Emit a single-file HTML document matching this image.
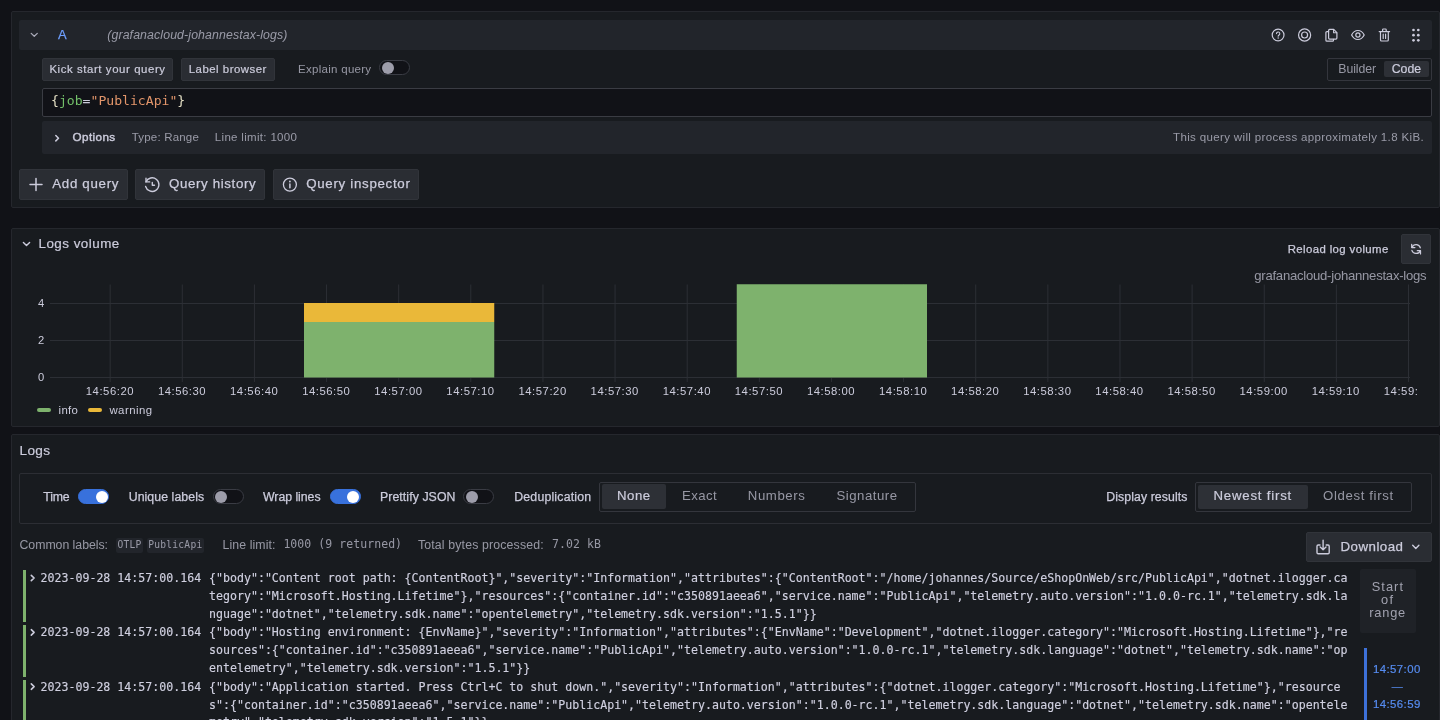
<!DOCTYPE html>
<html lang="en">
<head>
<meta charset="utf-8">
<title>Explore - Loki logs</title>
<style>
*{box-sizing:border-box;margin:0;padding:0}
html,body{width:1440px;height:720px;overflow:hidden;background:#111217}
body{position:relative;font-family:"Liberation Sans",sans-serif;color:rgb(204,204,220)}
.b{position:absolute}
.t{position:absolute;height:20px;line-height:20px;white-space:pre}
.m{font-family:"DejaVu Sans Mono","Liberation Mono",monospace;font-size:11.6px;letter-spacing:0.005px;color:rgb(208,208,224);-webkit-text-stroke:0.15px rgb(208,208,224)}
.panel{position:absolute;background:#181b1f;border:1px solid #25272d;border-radius:2px}
.hdr{background:#22252b;border-radius:2px}
.btn{position:absolute;background:#2a2d33;border:1px solid #31343a;border-radius:2px}
.sw{position:absolute;width:31px;height:15.6px;border-radius:8px;background:#111217;border:1px solid #3a3c44}
.sw i{position:absolute;left:1.4px;top:0.8px;width:12px;height:12px;border-radius:50%;background:#9d9daa}
.sw.on{background:#3871dc;border-color:#3871dc}
.sw.on i{left:auto;right:0.4px;background:#fff}
.rg{position:absolute;background:#181b1f;border:1px solid #34363d;border-radius:2px}
.sel{position:absolute;background:#2d3036;border-radius:2px}
svg{position:absolute;overflow:visible}
.ic{fill:none;stroke:rgb(204,204,220);stroke-width:1.25;stroke-linecap:round;stroke-linejoin:round}
</style>
</head>
<body>
<div id="root" style="position:absolute;left:0;top:0;width:1440px;height:720px;will-change:transform">
<!-- ================= Query panel ================= -->
<div class="panel" style="left:11px;top:11px;width:1429px;height:197px"></div>
<div class="b hdr" style="left:19px;top:20px;width:1412.5px;height:30px"></div>
<div class="btn" style="left:42px;top:58px;width:131px;height:22.5px"></div>
<div class="btn" style="left:181px;top:58px;width:93.5px;height:22.5px"></div>
<div class="sw" style="left:379.2px;top:59.9px"><i></i></div>
<div class="rg" style="left:1327px;top:57.5px;width:104.75px;height:23px"></div>
<div class="sel" style="left:1383.75px;top:60.75px;width:45.5px;height:16.5px"></div>
<div class="b" style="left:42px;top:88px;width:1389.5px;height:28.5px;background:#111217;border:1px solid #3a3c43;border-radius:2px"></div>
<div class="t" style="left:51px;top:91px;font-family:'DejaVu Sans Mono','Liberation Mono',monospace;font-size:13.12px;letter-spacing:0"><span style="color:#e4dfc4">{</span><span style="color:#73bf69">job</span><span style="color:#ccccdc">=</span><span style="color:#e2956a">"PublicApi"</span><span style="color:#e4dfc4">}</span></div>
<div class="b hdr" style="left:42px;top:121px;width:1389.5px;height:33px"></div>
<div class="btn" style="left:19px;top:169px;width:109px;height:30.5px"></div>
<div class="btn" style="left:135px;top:169px;width:130px;height:30.5px"></div>
<div class="btn" style="left:273px;top:169px;width:145.75px;height:30.5px"></div>

<!-- ================= Logs volume panel ================= -->
<div class="panel" style="left:11px;top:228px;width:1429px;height:199px"></div>
<div class="btn" style="left:1400.5px;top:234px;width:30.5px;height:30px"></div>
<svg style="left:0;top:280px" width="1440" height="110" viewBox="0 280 1440 110">
<g stroke="#2c2f35" stroke-width="1">
<line x1="110.16" x2="110.16" y1="284.5" y2="382"/><line x1="182.29" x2="182.29" y1="284.5" y2="382"/><line x1="254.42" x2="254.42" y1="284.5" y2="382"/><line x1="326.55" x2="326.55" y1="284.5" y2="382"/><line x1="398.68" x2="398.68" y1="284.5" y2="382"/><line x1="470.81" x2="470.81" y1="284.5" y2="382"/><line x1="542.94" x2="542.94" y1="284.5" y2="382"/><line x1="615.07" x2="615.07" y1="284.5" y2="382"/><line x1="687.20" x2="687.20" y1="284.5" y2="382"/><line x1="759.33" x2="759.33" y1="284.5" y2="382"/><line x1="831.46" x2="831.46" y1="284.5" y2="382"/><line x1="903.59" x2="903.59" y1="284.5" y2="382"/><line x1="975.72" x2="975.72" y1="284.5" y2="382"/><line x1="1047.85" x2="1047.85" y1="284.5" y2="382"/><line x1="1119.98" x2="1119.98" y1="284.5" y2="382"/><line x1="1192.11" x2="1192.11" y1="284.5" y2="382"/><line x1="1264.24" x2="1264.24" y1="284.5" y2="382"/><line x1="1336.37" x2="1336.37" y1="284.5" y2="382"/><line x1="1408.50" x2="1408.50" y1="284.5" y2="382"/>
<line x1="50" x2="1410" y1="303.5" y2="303.5"/><line x1="50" x2="1410" y1="340.5" y2="340.5"/><line x1="50" x2="1410" y1="377.5" y2="377.5"/>
</g>
<rect x="304" y="322" width="190.25" height="55.5" fill="#7eb26d"/>
<rect x="304" y="303" width="190.25" height="19" fill="#eab839"/>
<rect x="736.75" y="284.25" width="190.25" height="93.25" fill="#7eb26d"/>
</svg>
<div class="b" style="left:0;top:380px;width:1417.5px;height:24px;overflow:hidden">
<div class="b" style="left:0;top:-380px;width:1440px;height:720px">
<div class="t" style="left:85.80px;top:381.00px;font-size:11.3px;letter-spacing:0.539px;color:rgb(204,204,220);">14:56:20</div>
<div class="t" style="left:157.91px;top:381.00px;font-size:11.3px;letter-spacing:0.539px;color:rgb(204,204,220);">14:56:30</div>
<div class="t" style="left:230.02px;top:381.00px;font-size:11.3px;letter-spacing:0.539px;color:rgb(204,204,220);">14:56:40</div>
<div class="t" style="left:302.13px;top:381.00px;font-size:11.3px;letter-spacing:0.539px;color:rgb(204,204,220);">14:56:50</div>
<div class="t" style="left:374.24px;top:381.00px;font-size:11.3px;letter-spacing:0.539px;color:rgb(204,204,220);">14:57:00</div>
<div class="t" style="left:446.35px;top:381.00px;font-size:11.3px;letter-spacing:0.539px;color:rgb(204,204,220);">14:57:10</div>
<div class="t" style="left:518.46px;top:381.00px;font-size:11.3px;letter-spacing:0.539px;color:rgb(204,204,220);">14:57:20</div>
<div class="t" style="left:590.57px;top:381.00px;font-size:11.3px;letter-spacing:0.539px;color:rgb(204,204,220);">14:57:30</div>
<div class="t" style="left:662.68px;top:381.00px;font-size:11.3px;letter-spacing:0.539px;color:rgb(204,204,220);">14:57:40</div>
<div class="t" style="left:734.79px;top:381.00px;font-size:11.3px;letter-spacing:0.539px;color:rgb(204,204,220);">14:57:50</div>
<div class="t" style="left:806.90px;top:381.00px;font-size:11.3px;letter-spacing:0.539px;color:rgb(204,204,220);">14:58:00</div>
<div class="t" style="left:879.01px;top:381.00px;font-size:11.3px;letter-spacing:0.539px;color:rgb(204,204,220);">14:58:10</div>
<div class="t" style="left:951.12px;top:381.00px;font-size:11.3px;letter-spacing:0.539px;color:rgb(204,204,220);">14:58:20</div>
<div class="t" style="left:1023.23px;top:381.00px;font-size:11.3px;letter-spacing:0.539px;color:rgb(204,204,220);">14:58:30</div>
<div class="t" style="left:1095.34px;top:381.00px;font-size:11.3px;letter-spacing:0.539px;color:rgb(204,204,220);">14:58:40</div>
<div class="t" style="left:1167.45px;top:381.00px;font-size:11.3px;letter-spacing:0.539px;color:rgb(204,204,220);">14:58:50</div>
<div class="t" style="left:1239.56px;top:381.00px;font-size:11.3px;letter-spacing:0.539px;color:rgb(204,204,220);">14:59:00</div>
<div class="t" style="left:1311.67px;top:381.00px;font-size:11.3px;letter-spacing:0.539px;color:rgb(204,204,220);">14:59:10</div>
<div class="t" style="left:1383.78px;top:381.00px;font-size:11.3px;letter-spacing:0.539px;color:rgb(204,204,220);">14:59:20</div>
</div></div>
<div class="b" style="left:37px;top:408px;width:14px;height:4px;border-radius:2px;background:#7eb26d"></div>
<div class="b" style="left:88px;top:408px;width:14px;height:4px;border-radius:2px;background:#eab839"></div>

<!-- ================= Logs panel ================= -->
<div class="panel" style="left:11px;top:434px;width:1429px;height:300px"></div>
<div class="b" style="left:19px;top:473px;width:1413px;height:51px;border:1px solid #2c2e34;border-radius:2px"></div>
<div class="sw on" style="left:78px;top:488.8px"><i></i></div>
<div class="sw" style="left:212.6px;top:488.8px"><i></i></div>
<div class="sw on" style="left:329.5px;top:488.8px"><i></i></div>
<div class="sw" style="left:463.4px;top:488.8px"><i></i></div>
<div class="rg" style="left:599px;top:481.5px;width:316.5px;height:30.5px"></div>
<div class="sel" style="left:601.5px;top:484.25px;width:64.25px;height:24.75px"></div>
<div class="rg" style="left:1195px;top:481.5px;width:217px;height:30.5px"></div>
<div class="sel" style="left:1198px;top:484.5px;width:110px;height:24.5px"></div>
<div class="b" style="left:116px;top:538px;width:27px;height:14.5px;background:#22252b;border-radius:2px"></div>
<div class="b" style="left:147px;top:538px;width:57px;height:14.5px;background:#22252b;border-radius:2px"></div>
<div class="btn" style="left:1306px;top:531.75px;width:126px;height:30px"></div>
<!-- level bars -->
<div class="b" style="left:23px;top:570px;width:3px;height:52px;background:#7eb26d"></div>
<div class="b" style="left:23px;top:625px;width:3px;height:52px;background:#7eb26d"></div>
<div class="b" style="left:23px;top:680px;width:3px;height:52px;background:#7eb26d"></div>
<div class="b" style="left:1360px;top:569px;width:56px;height:64.3px;background:#1f2227;border-radius:2px"></div>
<div class="b" style="left:1364px;top:648.3px;width:3.2px;height:80px;background:#3d71d9"></div>

<div class="t m" style="left:40.5px;top:568.00px">2023-09-28 14:57:00.164</div>
<div class="t m" style="left:209.0px;top:568.00px">{&quot;body&quot;:&quot;Content root path: {ContentRoot}&quot;,&quot;severity&quot;:&quot;Information&quot;,&quot;attributes&quot;:{&quot;ContentRoot&quot;:&quot;/home/johannes/Source/eShopOnWeb/src/PublicApi&quot;,&quot;dotnet.ilogger.ca</div>
<div class="t m" style="left:209.0px;top:585.90px">tegory&quot;:&quot;Microsoft.Hosting.Lifetime&quot;},&quot;resources&quot;:{&quot;container.id&quot;:&quot;c350891aeea6&quot;,&quot;service.name&quot;:&quot;PublicApi&quot;,&quot;telemetry.auto.version&quot;:&quot;1.0.0-rc.1&quot;,&quot;telemetry.sdk.la</div>
<div class="t m" style="left:209.0px;top:603.80px">nguage&quot;:&quot;dotnet&quot;,&quot;telemetry.sdk.name&quot;:&quot;opentelemetry&quot;,&quot;telemetry.sdk.version&quot;:&quot;1.5.1&quot;}}</div>
<div class="t m" style="left:40.5px;top:622.40px">2023-09-28 14:57:00.164</div>
<div class="t m" style="left:209.0px;top:622.40px">{&quot;body&quot;:&quot;Hosting environment: {EnvName}&quot;,&quot;severity&quot;:&quot;Information&quot;,&quot;attributes&quot;:{&quot;EnvName&quot;:&quot;Development&quot;,&quot;dotnet.ilogger.category&quot;:&quot;Microsoft.Hosting.Lifetime&quot;},&quot;re</div>
<div class="t m" style="left:209.0px;top:640.30px">sources&quot;:{&quot;container.id&quot;:&quot;c350891aeea6&quot;,&quot;service.name&quot;:&quot;PublicApi&quot;,&quot;telemetry.auto.version&quot;:&quot;1.0.0-rc.1&quot;,&quot;telemetry.sdk.language&quot;:&quot;dotnet&quot;,&quot;telemetry.sdk.name&quot;:&quot;op</div>
<div class="t m" style="left:209.0px;top:658.20px">entelemetry&quot;,&quot;telemetry.sdk.version&quot;:&quot;1.5.1&quot;}}</div>
<div class="t m" style="left:40.5px;top:676.60px">2023-09-28 14:57:00.164</div>
<div class="t m" style="left:209.0px;top:676.60px">{&quot;body&quot;:&quot;Application started. Press Ctrl+C to shut down.&quot;,&quot;severity&quot;:&quot;Information&quot;,&quot;attributes&quot;:{&quot;dotnet.ilogger.category&quot;:&quot;Microsoft.Hosting.Lifetime&quot;},&quot;resource</div>
<div class="t m" style="left:209.0px;top:694.50px">s&quot;:{&quot;container.id&quot;:&quot;c350891aeea6&quot;,&quot;service.name&quot;:&quot;PublicApi&quot;,&quot;telemetry.auto.version&quot;:&quot;1.0.0-rc.1&quot;,&quot;telemetry.sdk.language&quot;:&quot;dotnet&quot;,&quot;telemetry.sdk.name&quot;:&quot;opentele</div>
<div class="t m" style="left:209.0px;top:712.40px">metry&quot;,&quot;telemetry.sdk.version&quot;:&quot;1.5.1&quot;}}</div>
<div class="t" style="left:58.10px;top:24.50px;font-size:13.0px;letter-spacing:0.328px;color:#6e9fff;-webkit-text-stroke:0.25px #6e9fff;">A</div>
<div class="t" style="left:107.25px;top:25.00px;font-size:12.3px;letter-spacing:0.125px;color:rgba(204,204,220,0.7);font-style:italic;">(grafanacloud-johannestax-logs)</div>
<div class="t" style="left:49.40px;top:58.90px;font-size:11.4px;letter-spacing:0.589px;color:rgb(204,204,220);-webkit-text-stroke:0.2px rgb(204,204,220);">Kick start your query</div>
<div class="t" style="left:188.75px;top:58.90px;font-size:11.4px;letter-spacing:0.507px;color:rgb(204,204,220);-webkit-text-stroke:0.2px rgb(204,204,220);">Label browser</div>
<div class="t" style="left:298.10px;top:58.90px;font-size:11.5px;letter-spacing:0.278px;color:rgba(204,204,220,0.7);">Explain query</div>
<div class="t" style="left:72.60px;top:127.00px;font-size:11.7px;letter-spacing:0.374px;color:rgb(204,204,220);-webkit-text-stroke:0.4px rgb(204,204,220);">Options</div>
<div class="t" style="left:131.75px;top:127.10px;font-size:11.5px;letter-spacing:0.185px;color:rgba(204,204,220,0.7);">Type: Range</div>
<div class="t" style="left:214.80px;top:127.10px;font-size:11.5px;letter-spacing:0.318px;color:rgba(204,204,220,0.7);">Line limit: 1000</div>
<div class="t" style="left:1173.00px;top:127.20px;font-size:11.5px;letter-spacing:0.357px;color:rgba(204,204,220,0.7);">This query will process approximately 1.8 KiB.</div>
<div class="t" style="left:52.25px;top:173.60px;font-size:13.3px;letter-spacing:0.692px;color:rgb(204,204,220);-webkit-text-stroke:0.25px rgb(204,204,220);">Add query</div>
<div class="t" style="left:169.00px;top:173.60px;font-size:13.3px;letter-spacing:0.629px;color:rgb(204,204,220);-webkit-text-stroke:0.25px rgb(204,204,220);">Query history</div>
<div class="t" style="left:306.25px;top:173.60px;font-size:13.3px;letter-spacing:0.693px;color:rgb(204,204,220);-webkit-text-stroke:0.25px rgb(204,204,220);">Query inspector</div>
<div class="t" style="left:1338.25px;top:59.00px;font-size:12.3px;letter-spacing:-0.076px;color:rgba(204,204,220,0.7);">Builder</div>
<div class="t" style="left:1391.75px;top:59.00px;font-size:12.3px;letter-spacing:-0.039px;color:rgb(204,204,220);-webkit-text-stroke:0.2px rgb(204,204,220);">Code</div>
<div class="t" style="left:38.50px;top:233.60px;font-size:13.4px;letter-spacing:0.483px;color:rgb(204,204,220);-webkit-text-stroke:0.2px rgb(204,204,220);">Logs volume</div>
<div class="t" style="left:1287.70px;top:239.00px;font-size:11.4px;letter-spacing:0.391px;color:rgb(204,204,220);-webkit-text-stroke:0.25px rgb(204,204,220);">Reload log volume</div>
<div class="t" style="left:1254.25px;top:265.70px;font-size:13.1px;letter-spacing:-0.239px;color:rgba(204,204,220,0.7);">grafanacloud-johannestax-logs</div>
<div class="t" style="left:37.90px;top:293.10px;font-size:11.2px;letter-spacing:0.166px;color:rgb(204,204,220);">4</div>
<div class="t" style="left:37.90px;top:330.40px;font-size:11.2px;letter-spacing:0.166px;color:rgb(204,204,220);">2</div>
<div class="t" style="left:37.90px;top:367.40px;font-size:11.2px;letter-spacing:0.166px;color:rgb(204,204,220);">0</div>
<div class="t" style="left:58.50px;top:399.80px;font-size:11.4px;letter-spacing:0.356px;color:rgb(204,204,220);">info</div>
<div class="t" style="left:109.40px;top:399.80px;font-size:11.4px;letter-spacing:0.473px;color:rgb(204,204,220);">warning</div>
<div class="t" style="left:19.50px;top:440.80px;font-size:13.6px;letter-spacing:0.329px;color:rgb(204,204,220);-webkit-text-stroke:0.2px rgb(204,204,220);">Logs</div>
<div class="t" style="left:43.30px;top:486.80px;font-size:12.3px;letter-spacing:-0.169px;color:rgb(204,204,220);-webkit-text-stroke:0.25px rgb(204,204,220);">Time</div>
<div class="t" style="left:128.70px;top:486.80px;font-size:12.3px;letter-spacing:0.076px;color:rgb(204,204,220);-webkit-text-stroke:0.25px rgb(204,204,220);">Unique labels</div>
<div class="t" style="left:263.00px;top:486.80px;font-size:12.3px;letter-spacing:-0.037px;color:rgb(204,204,220);-webkit-text-stroke:0.25px rgb(204,204,220);">Wrap lines</div>
<div class="t" style="left:380.00px;top:486.80px;font-size:12.3px;letter-spacing:0.078px;color:rgb(204,204,220);-webkit-text-stroke:0.25px rgb(204,204,220);">Prettify JSON</div>
<div class="t" style="left:514.25px;top:486.80px;font-size:12.3px;letter-spacing:0.191px;color:rgb(204,204,220);-webkit-text-stroke:0.25px rgb(204,204,220);">Deduplication</div>
<div class="t" style="left:617.00px;top:486.00px;font-size:13.2px;letter-spacing:0.555px;color:rgb(204,204,220);-webkit-text-stroke:0.2px rgb(204,204,220);">None</div>
<div class="t" style="left:682.00px;top:486.00px;font-size:13.2px;letter-spacing:0.403px;color:rgba(204,204,220,0.7);">Exact</div>
<div class="t" style="left:747.75px;top:486.00px;font-size:13.2px;letter-spacing:0.607px;color:rgba(204,204,220,0.7);">Numbers</div>
<div class="t" style="left:836.50px;top:486.00px;font-size:13.2px;letter-spacing:0.505px;color:rgba(204,204,220,0.7);">Signature</div>
<div class="t" style="left:1106.25px;top:486.80px;font-size:12.3px;letter-spacing:0.085px;color:rgb(204,204,220);-webkit-text-stroke:0.25px rgb(204,204,220);">Display results</div>
<div class="t" style="left:1213.50px;top:486.00px;font-size:13.2px;letter-spacing:0.801px;color:rgb(204,204,220);-webkit-text-stroke:0.2px rgb(204,204,220);">Newest first</div>
<div class="t" style="left:1323.00px;top:486.00px;font-size:13.2px;letter-spacing:0.643px;color:rgba(204,204,220,0.7);">Oldest first</div>
<div class="t" style="left:19.50px;top:534.70px;font-size:12.3px;letter-spacing:-0.026px;color:rgba(204,204,220,0.7);">Common labels:</div>
<div class="t" style="left:117.46px;top:534.50px;font-size:9.6px;letter-spacing:0.243px;color:rgba(204,204,220,0.7);font-family:'DejaVu Sans Mono', 'Liberation Mono', monospace;">OTLP</div>
<div class="t" style="left:148.26px;top:534.50px;font-size:9.6px;letter-spacing:0.244px;color:rgba(204,204,220,0.7);font-family:'DejaVu Sans Mono', 'Liberation Mono', monospace;">PublicApi</div>
<div class="t" style="left:222.50px;top:534.70px;font-size:12.3px;letter-spacing:0.095px;color:rgba(204,204,220,0.7);">Line limit:</div>
<div class="t" style="left:283.40px;top:533.60px;font-size:11.5px;letter-spacing:0.059px;color:rgba(204,204,220,0.7);font-family:'DejaVu Sans Mono', 'Liberation Mono', monospace;">1000 (9 returned)</div>
<div class="t" style="left:418.00px;top:534.70px;font-size:12.3px;letter-spacing:0.154px;color:rgba(204,204,220,0.7);">Total bytes processed:</div>
<div class="t" style="left:552.00px;top:533.60px;font-size:11.5px;letter-spacing:0.062px;color:rgba(204,204,220,0.7);font-family:'DejaVu Sans Mono', 'Liberation Mono', monospace;">7.02 kB</div>
<div class="t" style="left:1340.50px;top:536.80px;font-size:13.3px;letter-spacing:0.482px;color:rgb(204,204,220);-webkit-text-stroke:0.25px rgb(204,204,220);">Download</div>
<div class="t" style="left:1371.80px;top:577.20px;font-size:12.8px;letter-spacing:1.034px;color:rgba(204,204,220,0.75);">Start</div>
<div class="t" style="left:1381.00px;top:590.20px;font-size:12.8px;letter-spacing:1.406px;color:rgba(204,204,220,0.75);">of</div>
<div class="t" style="left:1369.30px;top:603.30px;font-size:12.8px;letter-spacing:0.793px;color:rgba(204,204,220,0.75);">range</div>
<div class="t" style="left:1373.00px;top:658.80px;font-size:11.4px;letter-spacing:0.420px;color:#568cf0;-webkit-text-stroke:0.2px #568cf0;">14:57:00</div>
<div class="t" style="left:1391.50px;top:675.80px;font-size:11.4px;letter-spacing:0.109px;color:#568cf0;">—</div>
<div class="t" style="left:1373.00px;top:694.30px;font-size:11.4px;letter-spacing:0.420px;color:#568cf0;-webkit-text-stroke:0.2px #568cf0;">14:56:59</div>
<svg style="left:0;top:0" width="1440" height="720" viewBox="0 0 1440 720">
<g class="ic">
<!-- header chevron-down -->
<path d="M31.200 33.400 L34.250 36.300 L37.300 33.400" stroke-width="1.250" stroke="rgba(204,204,220,0.8)"/>
<!-- help circle -->
<circle cx="1278.1" cy="35" r="5.9" stroke-width="1.2"/>
<path d="M1276.5 33.6a1.65 1.65 0 1 1 2.6 1.35c-.6.42-.95.75-.95 1.35" stroke-width="1.1"/>
<circle cx="1278.15" cy="38" r=".7" fill="rgb(204,204,220)" stroke="none"/>
<!-- target / origin -->
<circle cx="1304.6" cy="35" r="6.05" stroke-width="1.2"/>
<circle cx="1304.6" cy="35" r="3" stroke-width="1.2"/>
<!-- copy -->
<path d="M1328.6 31.6h-1.7a1 1 0 0 0-1 1v7.6a1 1 0 0 0 1 1h5.6a1 1 0 0 0 1-1v-.9" stroke-width="1.2"/>
<path d="M1329.6 29.4h4.1l3.2 3.2v5.5a1 1 0 0 1-1 1h-6.3a1 1 0 0 1-1-1v-7.7a1 1 0 0 1 1-1z" stroke-width="1.2"/>
<path d="M1333.6 29.6v3.1h3.1" stroke-width="1.1"/>
<!-- eye -->
<path d="M1351.6 35c1.5-3 3.7-4.5 6.3-4.5s4.8 1.500 6.300 4.500c-1.500 3-3.700 4.500-6.300 4.500s-4.800-1.500-6.300-4.500z" stroke-width="1.2"/>
<circle cx="1357.9" cy="35" r="2.1" stroke-width="1.2"/>
<!-- trash -->
<path d="M1379.2 31.6h10.400M1382.600 31.400v-1.600a.8.800 0 0 1 .8-.8h2a.8.800 0 0 1 .8.800v1.600M1380.500 31.800v8.200a1 1 0 0 0 1 1h5.800a1 1 0 0 0 1-1v-8.200M1383.200 34.200v4.200M1385.600 34.200v4.200" stroke-width="1.2"/>
<!-- options chevron-right -->
<path d="M55.800 135.500 L58.500 138.200 L55.800 140.900" stroke-width="1.500"/>
<!-- plus -->
<path d="M30 184.600h12M36 178.600v12" stroke-width="1.5"/>
<!-- history -->
<path d="M145.900 181.900a6.800 6.800 0 1 1 -.3 4.600" stroke-width="1.350"/>
<path d="M146 178.200v3.700h3.700" stroke-width="1.350"/>
<path d="M152.300 182.300v2.900h2.200" stroke-width="1.350"/>
<!-- info circle -->
<circle cx="289.900" cy="184.600" r="6.500" stroke-width="1.3"/>
<path d="M289.900 184v3.700" stroke-width="1.5"/>
<circle cx="289.900" cy="181.500" r=".9" fill="rgb(204,204,220)" stroke="none"/>
<!-- logs volume chevron-down -->
<path d="M23.400 242.500 L26.500 245.600 L29.600 242.500" stroke-width="1.4"/>
<!-- sync -->
<path d="M1412 247.500A4.400 4.400 0 0 1 1420.300 247.800M1420.200 250.700A4.400 4.400 0 0 1 1411.900 250.400" stroke-width="1.250"/>
<path d="M1411.700 244.300v3.200h3.200M1420.500 253.900v-3.200h-3.200" stroke-width="1.250"/>
<!-- download -->
<path d="M1323.100 540.300v9.300M1320.200 546.900l2.900 2.900l2.900-2.900" stroke-width="1.4"/>
<path d="M1320 545h-1.800a1.200 1.200 0 0 0-1.200 1.200v6.400a1.200 1.200 0 0 0 1.200 1.200h9.800a1.200 1.200 0 0 0 1.200-1.200v-6.400a1.200 1.200 0 0 0-1.200-1.200h-1.800" stroke-width="1.400"/>
<!-- download chevron -->
<path d="M1412.700 545.300 L1415.800 548.400 L1418.900 545.300" stroke-width="1.400"/>
<!-- log row chevrons -->
<path d="M31.300 575.300 L34.100 578.000 L31.300 580.700" stroke-width="1.600"/>
<path d="M31.300 629.700 L34.100 632.400 L31.300 635.100" stroke-width="1.600"/>
<path d="M31.300 683.900 L34.100 686.600 L31.300 689.300" stroke-width="1.600"/>
</g>
<!-- drag dots -->
<g fill="rgb(204,204,220)">
<circle cx="1413.500" cy="30" r="1.350"/><circle cx="1418.300" cy="30" r="1.350"/>
<circle cx="1413.500" cy="35.200" r="1.350"/><circle cx="1418.300" cy="35.200" r="1.350"/>
<circle cx="1413.500" cy="40.300" r="1.350"/><circle cx="1418.300" cy="40.300" r="1.350"/>
</g>
</svg>

</div>
</body>
</html>
